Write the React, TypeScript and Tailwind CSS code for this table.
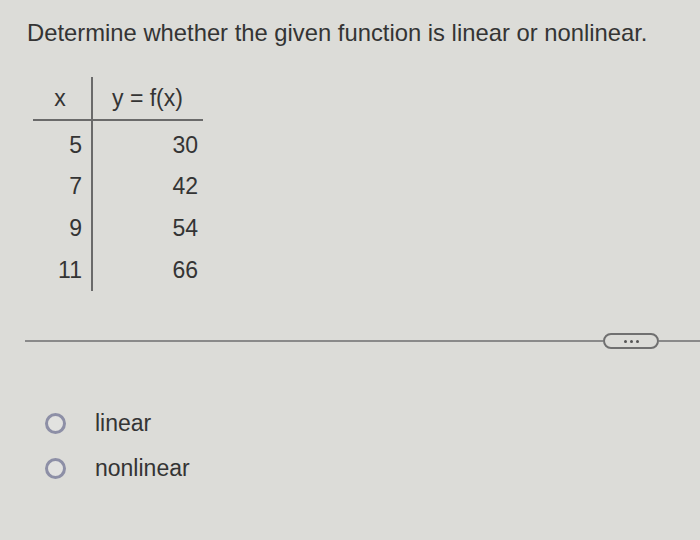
const rows = [
  { x: 5, y: 30 },
  { x: 7, y: 42 },
  { x: 9, y: 54 },
  { x: 11, y: 66 },
];

const options = ['linear', 'nonlinear'];

export default function App() {
  return (
    <div className="w-[700px] h-[540px] overflow-hidden bg-[#dcdcd8] text-[#343434] font-['Liberation_Sans',Arial,sans-serif]">
      <div className="pt-[17px] pl-[27px] text-[23.8px] leading-[32px]">
        Determine whether the given function is linear or nonlinear.
      </div>

      {/* table */}
      <div className="ml-[33px] mt-[28px] w-[170px] text-[23px]">
        <div className="flex h-[44px] border-b-2 border-[#6a6a6a]">
          <div className="w-[60px] border-r-2 border-[#6a6a6a] flex items-center justify-center pr-[4px]">x</div>
          <div className="flex-1 flex items-center pl-[19px]">y = f(x)</div>
        </div>
        {rows.map((r, i) => (
          <div key={r.x} className={`flex ${i === 0 ? 'h-[44px]' : 'h-[42px]'}`}>
            <div className={`w-[60px] border-r-2 border-[#6a6a6a] flex items-center justify-end pr-[9px] ${i === 0 ? 'pt-[4px]' : ''}`}>
              {r.x}
            </div>
            <div className={`flex-1 flex items-center justify-end pr-[5px] ${i === 0 ? 'pt-[4px]' : ''}`}>{r.y}</div>
          </div>
        ))}
      </div>

      {/* divider */}
      <div className="mt-[42px] ml-[25px] flex items-center">
        <div className="flex-1 h-[2px] bg-[#8a8a8a]" />
        <div className="w-[56px] h-[16px] rounded-full border-2 border-[#707070] flex items-center justify-center gap-[3px]">
          <span className="w-[3px] h-[3px] rounded-full bg-[#555]" />
          <span className="w-[3px] h-[3px] rounded-full bg-[#555]" />
          <span className="w-[3px] h-[3px] rounded-full bg-[#555]" />
        </div>
        <div className="w-[41px] h-[2px] bg-[#8a8a8a]" />
      </div>

      {/* options */}
      <div className="mt-[58px] ml-[45px] flex flex-col gap-[13px]">
        {options.map((o) => (
          <label key={o} className="flex items-center h-[32px] text-[23px]">
            <span className="w-[21px] h-[21px] rounded-full border-[3px] border-[#8d8fa6] bg-[#e2e2e0]" />
            <span className="ml-[29px]">{o}</span>
          </label>
        ))}
      </div>
    </div>
  );
}
